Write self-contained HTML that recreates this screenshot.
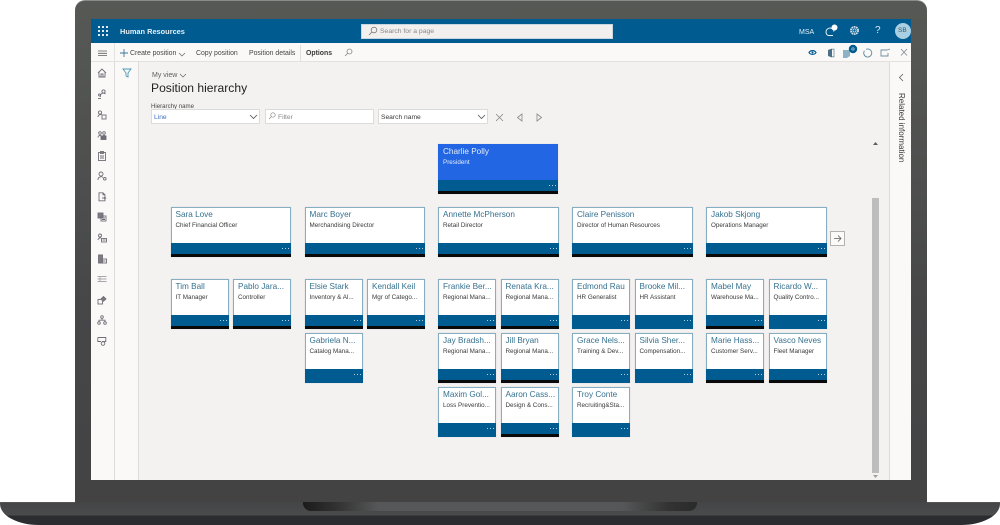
<!DOCTYPE html>
<html lang="en"><head><meta charset="utf-8"><title>Position hierarchy</title>
<style>
html,body{margin:0;padding:0;background:#fff}
body{width:1000px;height:525px;position:relative;overflow:hidden;font-family:"Liberation Sans",sans-serif;color:#323130}
div,span,svg{position:absolute;box-sizing:border-box}
.t{white-space:nowrap;line-height:1}
.c{background:#fff;box-shadow:inset 0 0 0 1px #86aec2,0 0 1px #ccc;overflow:hidden;height:50px}
.c .n{position:absolute;left:5px;top:3px;font-size:8.2px;line-height:10px;color:#35718f;white-space:nowrap}
.c .s{position:absolute;left:5px;top:15px;font-size:6.3px;line-height:8px;color:#3b3a39;white-space:nowrap}
.c .f{position:absolute;left:0;right:0;top:36px;height:14px;background:#005b91}
.c.k .f{border-bottom:3px solid #0a0a0a}
.c .d{position:absolute;right:2px;top:5px;width:7px;height:1px;background:repeating-linear-gradient(90deg,#b9cddc 0 1px,transparent 1px 3px)}
.nv svg{left:6px;width:10px;height:10px;opacity:.85}
.nv svg *{stroke:#5b5460;fill:none;stroke-width:.9}
</style></head><body>

<!-- laptop -->
<div style="left:75px;top:0;width:852px;height:503px;background:linear-gradient(#565855,#545653 60px,#474748 300px,#434344);border-radius:10px 10px 0 0;border-top:1px solid #8a8b88"></div>
<div style="left:0;top:502px;width:1000px;height:23px;background:linear-gradient(#444546,#4a4b4c 13px,#2b2c30 14px,#2b2c30);border-radius:2px 2px 42px 42px / 2px 2px 23px 23px"></div>
<div style="left:0;top:502px;width:75px;height:1px;background:#555"></div>
<div style="left:927px;top:502px;width:73px;height:1px;background:#555"></div>
<div style="left:303px;top:502px;width:394px;height:9px;border-radius:0 0 8px 8px;background:linear-gradient(90deg,#1b1b1b,#333 35px,#565758 75px,#565758 320px,#333 365px,#2a2a2a)"></div>

<!-- screen -->
<div style="left:91px;top:19px;width:820px;height:461px;background:#f3f2f1;overflow:hidden;filter:blur(.25px)">
  <div style="left:0;top:0;width:820px;height:24px;background:#005b91"></div>
  <!-- waffle -->
  <svg style="left:7px;top:7px" width="10" height="10" viewBox="0 0 10 10" fill="#dfeaf2"><rect x="0" y="0" width="2" height="2"/><rect x="4" y="0" width="2" height="2"/><rect x="8" y="0" width="2" height="2"/><rect x="0" y="4" width="2" height="2"/><rect x="4" y="4" width="2" height="2"/><rect x="8" y="4" width="2" height="2"/><rect x="0" y="8" width="2" height="2"/><rect x="4" y="8" width="2" height="2"/><rect x="8" y="8" width="2" height="2"/></svg>
  <div class="t" style="left:29px;top:9px;font-size:7.4px;font-weight:bold;color:#e6eff5">Human Resources</div>
  <div style="left:270px;top:4.500px;width:252px;height:15px;background:#f1f0ef;border:1px solid #c9d6df"></div>
  <svg style="left:277px;top:7px" width="10" height="10" viewBox="0 0 10 10"><circle cx="6" cy="4" r="2.800" fill="none" stroke="#777" stroke-width=".8"/><path d="M4 6L1 9" stroke="#777" stroke-width=".8"/></svg>
  <div class="t" style="left:289px;top:9.500px;font-size:6.800px;color:#8a8886">Search for a page</div>
  <div class="t" style="left:708px;top:10px;font-size:7px;color:#e3edf3">MSA</div>
  <svg style="left:734px;top:5px" width="14" height="14" viewBox="0 0 14 14"><path d="M3 11.500a4 4 0 1 1 6-4" fill="none" stroke="#e8f0f5" stroke-width="1"/><path d="M3 11.500h5" stroke="#e8f0f5"/><circle cx="9.500" cy="3.500" r="3" fill="#fff"/></svg>
  <svg style="left:757px;top:5px" width="13" height="13" viewBox="0 0 13 13"><circle cx="6.500" cy="6.500" r="3.600" fill="none" stroke="#cfe0ea" stroke-width="1.800" stroke-dasharray="1.700 .6"/><circle cx="6.500" cy="6.500" r="1.600" fill="none" stroke="#cfe0ea" stroke-width=".8"/></svg>
  <div class="t" style="left:784px;top:7px;font-size:10px;color:#dfeaf2">?</div>
  <div style="left:804px;top:4px;width:16px;height:16px;border-radius:50%;background:#a9cfe3"></div>
  <div class="t" style="left:807px;top:9px;font-size:6.500px;color:#36576b">SB</div>

  <!-- command bar -->
  <div style="left:0;top:24px;width:820px;height:19px;background:#faf9f8;border-bottom:1px solid #e3e1df"></div>
  <svg style="left:7px;top:31px" width="9" height="7" viewBox="0 0 9 7"><path d="M0 1h9M0 3.300h9M0 5.600h9" stroke="#605e5c" stroke-width=".8"/></svg>
  <div style="left:23px;top:24px;width:1px;height:19px;background:#e6e4e2"></div>
  <svg style="left:28px;top:29px" width="10" height="10" viewBox="0 0 10 10"><path d="M5 1v8M1 5h8" stroke="#3f7698" stroke-width=".9"/></svg>
  <div class="t" style="left:39px;top:31.500px;font-size:6.900px;color:#484644">Create position</div>
  <svg style="left:87px;top:33px" width="8" height="5" viewBox="0 0 8 5"><path d="M1 1l3 3 3-3" fill="none" stroke="#666" stroke-width=".7"/></svg>
  <div class="t" style="left:105px;top:31.500px;font-size:6.900px;color:#484644">Copy position</div>
  <div class="t" style="left:158px;top:31.500px;font-size:6.900px;color:#484644">Position details</div>
  <div style="left:209px;top:26px;width:1px;height:16px;background:#e1dfdd"></div>
  <div class="t" style="left:215px;top:31.500px;font-size:6.900px;font-weight:bold;color:#3b3a39">Options</div>
  <svg style="left:253px;top:29px" width="9" height="9" viewBox="0 0 9 9"><circle cx="5.500" cy="3.500" r="2.500" fill="none" stroke="#8a8886" stroke-width=".8"/><path d="M3.700 5.300L1 8" stroke="#8a8886" stroke-width=".8"/></svg>

  <svg style="left:717px;top:30px" width="9" height="7" viewBox="0 0 9 7"><path d="M1 3.500C2.500 1 6.500 1 8 3.500 6.500 6 2.500 6 1 3.500z" fill="none" stroke="#005b91" stroke-width="1.200"/><circle cx="4.500" cy="3.500" r="1" fill="#005b91"/></svg>
  <svg style="left:736px;top:29px" width="8" height="10" viewBox="0 0 8 10"><path d="M1 2l4-1.500v9L1 8z" fill="#4d6f85"/><path d="M5 1.200h2v7.600H5" fill="none" stroke="#6d8da1" stroke-width=".8"/></svg>
  <svg style="left:751px;top:25px" width="17" height="15" viewBox="0 0 17 15"><path d="M1 6h7v6l-3 2H1z" fill="#8db2c8"/><circle cx="11" cy="5" r="4.200" fill="#005b91"/><circle cx="11" cy="5" r="1.200" fill="none" stroke="#cfe0ea" stroke-width=".6"/></svg>
  <svg style="left:772px;top:29px" width="10" height="10" viewBox="0 0 10 10"><path d="M3 1.400a4 4 0 1 1-1.600 1.400" fill="none" stroke="#5f8aa3" stroke-width=".9"/></svg>
  <svg style="left:789px;top:29px" width="11" height="9" viewBox="0 0 11 9"><path d="M7 2H1v6h7V5" fill="none" stroke="#6d8da1" stroke-width=".9"/><path d="M7 2l3-1" stroke="#6d8da1" stroke-width=".9"/></svg>
  <svg style="left:809px;top:29px" width="8" height="9" viewBox="0 0 8 9"><path d="M1 1l6 6.500M7 1L1 7.500" stroke="#7a8a95" stroke-width=".8"/></svg>

  <!-- left nav -->
  <div style="left:0;top:43px;width:23.500px;height:418px;background:#faf9f8;border-right:1px solid #dedcda"></div>
  <div style="left:23.500px;top:43px;width:24px;height:418px;background:#faf9f8;border-right:1px solid #dedcda"></div>
  <svg style="left:31px;top:49px" width="10" height="10" viewBox="0 0 10 10"><path d="M1 1h8L6 5v4L4 8V5z" fill="none" stroke="#4a9ab5" stroke-width=".9"/></svg>
  <div class="nv" style="left:0;top:43px;width:23px;height:300px">
    <svg style="top:6px" viewBox="0 0 10 10"><path d="M1 5l4-4 4 4M2 4.500V9h6V4.500M4 9V6h2v3"/></svg>
    <svg style="top:27px" viewBox="0 0 10 10"><circle cx="6.500" cy="2.500" r="1.600"/><path d="M3.500 8a3 3 0 0 1 5-3"/><circle cx="2.500" cy="6" r="1"/><path d="M1 9.500h3"/></svg>
    <svg style="top:48px" viewBox="0 0 10 10"><circle cx="3" cy="2.500" r="1.600"/><path d="M1 7a2.500 2.500 0 0 1 4-2"/><rect x="5" y="5" width="4" height="4"/></svg>
    <svg style="top:68px" viewBox="0 0 10 10"><circle cx="3" cy="3" r="1.300"/><circle cx="7" cy="3" r="1.300"/><path d="M1 7.500a2 2 0 0 1 4 0M5 7.500a2 2 0 0 1 4 0"/><rect x="4" y="6" width="5" height="3.500" style="fill:#5b5460"/></svg>
    <svg style="top:89px" viewBox="0 0 10 10"><rect x="1.500" y="1.500" width="7" height="8"/><rect x="3.500" y=".5" width="3" height="2"/><path d="M3 5h4M3 7h4"/></svg>
    <svg style="top:109px" viewBox="0 0 10 10"><circle cx="4" cy="3" r="2"/><path d="M1 9a3 3 0 0 1 5-2.500"/><circle cx="7.800" cy="7.800" r="1.300"/></svg>
    <svg style="top:130px" viewBox="0 0 10 10"><path d="M2 .8h4l2 2v6H2zM6 .8v2h2"/><path d="M5 6l3.500 0-1.200-1.200M8.500 6L7.300 7.200"/></svg>
    <svg style="top:150px" viewBox="0 0 10 10"><rect x="1" y="1" width="5" height="5" style="fill:#6b6570"/><rect x="4" y="4" width="5" height="5"/><path d="M5 6h3M5 7.500h3"/></svg>
    <svg style="top:171px" viewBox="0 0 10 10"><circle cx="3" cy="2.500" r="1.500"/><path d="M1 7a2.300 2.300 0 0 1 3-2"/><rect x="4.500" y="5.500" width="5" height="3.500"/><path d="M5.500 7h3"/></svg>
    <svg style="top:192px" viewBox="0 0 10 10"><path d="M1.500 1h4v8h-4z" style="fill:#6b6570"/><rect x="5" y="5" width="4.500" height="4"/><path d="M6 7h2.500"/></svg>
    <svg style="top:212px" viewBox="0 0 10 10"><path d="M.5 2.500h9M.5 5h9M.5 7.500h9M3 2v6" style="stroke:#9a98a0"/></svg>
    <svg style="top:233px" viewBox="0 0 10 10"><rect x="1" y="4.500" width="4.500" height="4.500"/><path d="M3.500 4.500L6.500 1.500 9 4l-3 2.500" style="fill:#6b6570"/></svg>
    <svg style="top:253px" viewBox="0 0 10 10"><circle cx="5" cy="2" r="1.300"/><circle cx="2" cy="8" r="1.300"/><circle cx="8" cy="8" r="1.300"/><path d="M5 3.300V5M2 6.700V5.200h6v1.500"/></svg>
    <svg style="top:274px" viewBox="0 0 10 10"><path d="M.8 1.500h8v4H5"/><path d="M.8 1.500v4H4"/><circle cx="6" cy="7.500" r="1.800"/></svg>
  </div>

  <!-- title -->
  <div class="t" style="left:61px;top:53px;font-size:7px;color:#605e5c">My view</div>
  <svg style="left:88px;top:54px" width="8" height="5" viewBox="0 0 8 5"><path d="M1 1l3 3 3-3" fill="none" stroke="#666" stroke-width=".7"/></svg>
  <div class="t" style="left:60px;top:63px;font-size:12.100px;color:#201f1e">Position hierarchy</div>
  <div class="t" style="left:60px;top:85px;font-size:6.100px;color:#484644">Hierarchy name</div>
  <div style="left:60px;top:90px;width:109px;height:15px;background:#fff;border:1px solid #dddbd9"></div>
  <div class="t" style="left:63px;top:96px;font-size:6.700px;color:#3b6fc4">Line</div>
  <svg style="left:158px;top:95px" width="9" height="6" viewBox="0 0 9 6"><path d="M1 1l3.500 3.500L8 1" fill="none" stroke="#555" stroke-width=".8"/></svg>
  <div style="left:174px;top:90px;width:109px;height:15px;background:#fff;border:1px solid #dddbd9"></div>
  <svg style="left:177px;top:93px" width="8" height="8" viewBox="0 0 8 8"><circle cx="5" cy="3" r="2.200" fill="none" stroke="#8a8886" stroke-width=".7"/><path d="M3.400 4.600L1 7" stroke="#8a8886" stroke-width=".7"/></svg>
  <div class="t" style="left:187px;top:96px;font-size:6.700px;color:#8a8886">Filter</div>
  <div style="left:287px;top:90px;width:110px;height:15px;background:#fff;border:1px solid #dddbd9"></div>
  <div class="t" style="left:290px;top:96px;font-size:6.700px;color:#3b3a39">Search name</div>
  <svg style="left:386px;top:95px" width="9" height="6" viewBox="0 0 9 6"><path d="M1 1l3.500 3.500L8 1" fill="none" stroke="#555" stroke-width=".8"/></svg>
  <svg style="left:404px;top:94px" width="9" height="9" viewBox="0 0 9 9"><path d="M1 1l7 7M8 1L1 8" stroke="#8a8886" stroke-width=".8"/></svg>
  <svg style="left:425px;top:94px" width="7" height="9" viewBox="0 0 7 9"><path d="M6 1L1.500 4.500 6 8z" fill="none" stroke="#8a8886" stroke-width=".8"/></svg>
  <svg style="left:445px;top:94px" width="7" height="9" viewBox="0 0 7 9"><path d="M1 1l4.500 3.500L1 8z" fill="none" stroke="#8a8886" stroke-width=".8"/></svg>

  <!-- scrollbar -->
  <svg style="left:781px;top:122px" width="7" height="5" viewBox="0 0 7 5"><path d="M3.500 1L6 4H1z" fill="#605e5c"/></svg>
  <div style="left:781px;top:179px;width:6.500px;height:275px;background:#bdbdbd"></div>
  <svg style="left:781px;top:455px" width="7" height="5" viewBox="0 0 7 5"><path d="M1 1h5L3.500 4z" fill="#a19f9d"/></svg>

  <!-- next arrow -->
  <div style="left:739px;top:212px;width:15px;height:15px;background:#fafafa;border:1px solid #b5b3b1"></div>
  <svg style="left:741px;top:214px" width="11" height="11" viewBox="0 0 11 11"><path d="M2 5.500h7M6 2.500l3 3-3 3" fill="none" stroke="#605e5c" stroke-width=".8"/></svg>

  <!-- related panel -->
  <div style="left:798px;top:43px;width:22px;height:418px;background:#faf9f8;border-left:1px solid #dedcda"></div>
  <svg style="left:807px;top:54px" width="6" height="9" viewBox="0 0 6 9"><path d="M5 1L1.500 4.500 5 8" fill="none" stroke="#605e5c" stroke-width=".8"/></svg>
  <div class="t" style="left:805px;top:74px;font-size:8px;color:#3b3a39;transform-origin:0 0;transform:translateX(9px) rotate(90deg)">Related information</div>

  <!-- cards -->
  <div class="c k" style="left:347px;top:125px;width:120px;background:#2266e3;box-shadow:inset 0 0 0 1px #2266e3,0 0 1px #ccc"><span class="n" style="color:#e4ecfb">Charlie Polly</span><span class="s" style="color:#e4ecfb">President</span><span class="f"><span class="d"></span></span></div>

  <div class="c k" style="left:79.500px;top:188px;width:120.500px"><span class="n">Sara Love</span><span class="s">Chief Financial Officer</span><span class="f"><span class="d"></span></span></div>
  <div class="c k" style="left:213.500px;top:188px;width:120.500px"><span class="n">Marc Boyer</span><span class="s">Merchandising Director</span><span class="f"><span class="d"></span></span></div>
  <div class="c k" style="left:347px;top:188px;width:120.500px"><span class="n">Annette McPherson</span><span class="s">Retail Director</span><span class="f"><span class="d"></span></span></div>
  <div class="c k" style="left:481px;top:188px;width:120.500px"><span class="n">Claire Penisson</span><span class="s">Director of Human Resources</span><span class="f"><span class="d"></span></span></div>
  <div class="c k" style="left:615px;top:188px;width:120.500px"><span class="n">Jakob Skjong</span><span class="s">Operations Manager</span><span class="f"><span class="d"></span></span></div>

  <div class="c k" style="left:79.500px;top:260px;width:58px"><span class="n">Tim Ball</span><span class="s">IT Manager</span><span class="f"><span class="d"></span></span></div>
  <div class="c k" style="left:142px;top:260px;width:58px"><span class="n">Pablo Jara...</span><span class="s">Controller</span><span class="f"><span class="d"></span></span></div>
  <div class="c k" style="left:213.500px;top:260px;width:58px"><span class="n">Elsie Stark</span><span class="s">Inventory &amp; Al...</span><span class="f"><span class="d"></span></span></div>
  <div class="c k" style="left:276px;top:260px;width:58px"><span class="n">Kendall Keil</span><span class="s">Mgr of Catego...</span><span class="f"><span class="d"></span></span></div>
  <div class="c k" style="left:347px;top:260px;width:58px"><span class="n">Frankie Ber...</span><span class="s">Regional Mana...</span><span class="f"><span class="d"></span></span></div>
  <div class="c k" style="left:409.500px;top:260px;width:58px"><span class="n">Renata Kra...</span><span class="s">Regional Mana...</span><span class="f"><span class="d"></span></span></div>
  <div class="c" style="left:481px;top:260px;width:58px"><span class="n">Edmond Rau</span><span class="s">HR Generalist</span><span class="f"><span class="d"></span></span></div>
  <div class="c" style="left:543.500px;top:260px;width:58px"><span class="n">Brooke Mil...</span><span class="s">HR Assistant</span><span class="f"><span class="d"></span></span></div>
  <div class="c k" style="left:615px;top:260px;width:58px"><span class="n">Mabel May</span><span class="s">Warehouse Ma...</span><span class="f"><span class="d"></span></span></div>
  <div class="c" style="left:677.500px;top:260px;width:58px"><span class="n">Ricardo W...</span><span class="s">Quality Contro...</span><span class="f"><span class="d"></span></span></div>

  <div class="c" style="left:213.500px;top:314px;width:58px"><span class="n">Gabriela N...</span><span class="s">Catalog Mana...</span><span class="f"><span class="d"></span></span></div>
  <div class="c k" style="left:347px;top:314px;width:58px"><span class="n">Jay Bradsh...</span><span class="s">Regional Mana...</span><span class="f"><span class="d"></span></span></div>
  <div class="c k" style="left:409.500px;top:314px;width:58px"><span class="n">Jill Bryan</span><span class="s">Regional Mana...</span><span class="f"><span class="d"></span></span></div>
  <div class="c" style="left:481px;top:314px;width:58px"><span class="n">Grace Nels...</span><span class="s">Training &amp; Dev...</span><span class="f"><span class="d"></span></span></div>
  <div class="c" style="left:543.500px;top:314px;width:58px"><span class="n">Silvia Sher...</span><span class="s">Compensation...</span><span class="f"><span class="d"></span></span></div>
  <div class="c k" style="left:615px;top:314px;width:58px"><span class="n">Marie Hass...</span><span class="s">Customer Serv...</span><span class="f"><span class="d"></span></span></div>
  <div class="c k" style="left:677.500px;top:314px;width:58px"><span class="n">Vasco Neves</span><span class="s">Fleet Manager</span><span class="f"><span class="d"></span></span></div>

  <div class="c" style="left:347px;top:368px;width:58px"><span class="n">Maxim Gol...</span><span class="s">Loss Preventio...</span><span class="f"><span class="d"></span></span></div>
  <div class="c k" style="left:409.500px;top:368px;width:58px"><span class="n">Aaron Cass...</span><span class="s">Design &amp; Cons...</span><span class="f"><span class="d"></span></span></div>
  <div class="c" style="left:481px;top:368px;width:58px"><span class="n">Troy Conte</span><span class="s">Recruiting&amp;Sta...</span><span class="f"><span class="d"></span></span></div>
</div>
</body></html>
